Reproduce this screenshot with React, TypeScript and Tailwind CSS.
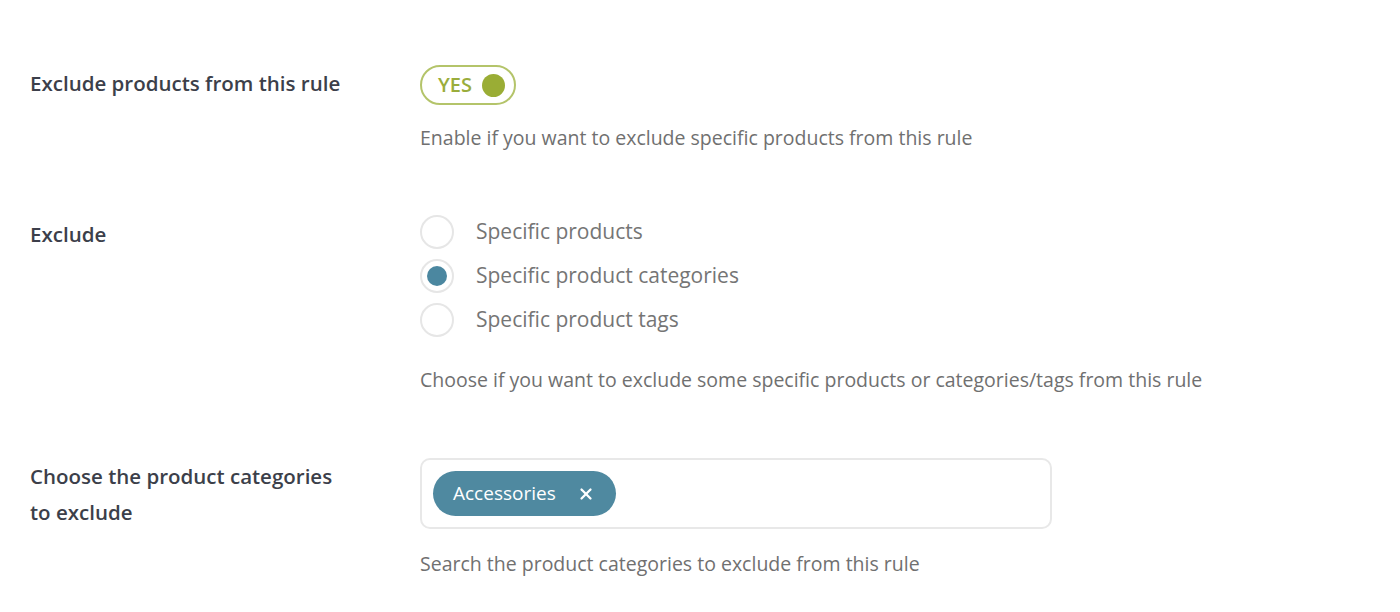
import { X } from 'lucide-react'

const font = { fontFamily: '"Open Sans", "Noto Sans", sans-serif' }

function Row({ label, children, className = '' }: { label: React.ReactNode; children: React.ReactNode; className?: string }) {
  return (
    <div className={`flex ${className}`}>
      <div className="w-[390px] shrink-0 text-[20.5px] font-semibold leading-[36px] text-[#3c3f4a]">{label}</div>
      <div className="flex-1">{children}</div>
    </div>
  )
}

function Radio({ checked, label }: { checked?: boolean; label: string }) {
  return (
    <label className="flex h-[44px] items-center gap-[22px]">
      <span className="flex h-[34px] w-[34px] items-center justify-center rounded-full border-2 border-[#e6e6e6] bg-white">
        {checked && <span className="h-[20px] w-[20px] rounded-full bg-[#4b87a0]" />}
      </span>
      <span className="text-[21px] text-[#757575]">{label}</span>
    </label>
  )
}

export default function App() {
  return (
    <div className="min-h-[612px] w-[1400px] bg-white pl-[30px]" style={font}>
      <Row label="Exclude products from this rule" className="pt-[65px]">
        <div>
          <button className="flex h-[40px] w-[96px] items-center rounded-full border-2 border-[#b4c46a] pl-[16px] pr-[9px]">
            <span className="text-[20px] font-semibold text-[#9aad3c]">YES</span>
            <span className="ml-auto h-[23px] w-[23px] rounded-full bg-[#9aad35]" />
          </button>
          <p className="mt-[20px] text-[19.5px] leading-[26px] text-[#707070]">Enable if you want to exclude specific products from this rule</p>
        </div>
      </Row>

      <Row label="Exclude" className="pt-[65px]">
        <div className="-mt-[6px]">
          <Radio label="Specific products" />
          <Radio checked label="Specific product categories" />
          <Radio label="Specific product tags" />
          <p className="mt-[25px] text-[19.5px] leading-[26px] text-[#707070]">
            Choose if you want to exclude some specific products or categories/tags from this rule
          </p>
        </div>
      </Row>

      <Row label={<>Choose the product categories<br />to exclude</>} className="pt-[65px]">
        <div>
          <div className="flex h-[71px] w-[632px] items-center rounded-[10px] border-2 border-[#e8e8e8] px-[11px]">
            <span className="flex h-[45px] items-center gap-[21px] rounded-full bg-[#4f89a0] pl-[20px] pr-[21px] text-[19px] text-white">
              Accessories
              <X size={18} strokeWidth={3} />
            </span>
          </div>
          <p className="mt-[22px] text-[19.5px] leading-[26px] text-[#707070]">Search the product categories to exclude from this rule</p>
        </div>
      </Row>
    </div>
  )
}
